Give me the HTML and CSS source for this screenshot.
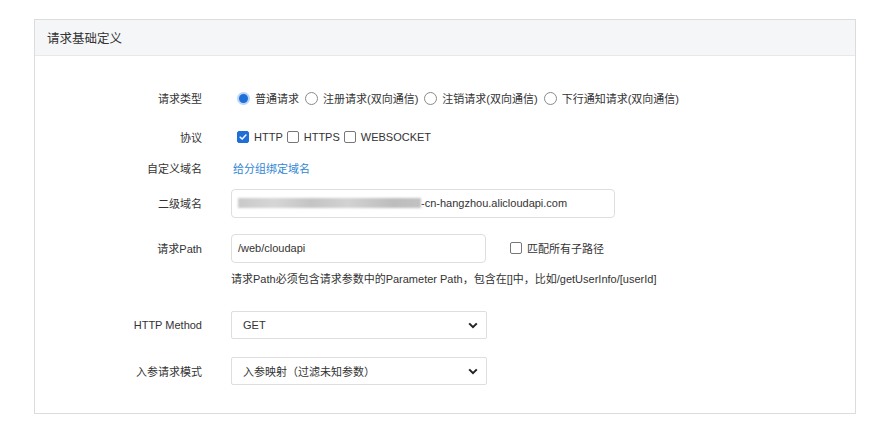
FILE: index.html
```html
<!DOCTYPE html>
<html lang="zh-CN">
<head>
<meta charset="utf-8">
<title>请求基础定义</title>
<link rel="stylesheet" href="styles.css">
</head>
<body>
<div class="page">
  <section class="panel">
    <header class="panel-head">请求基础定义</header>
    <div class="form">
      <div class="row r1">
        <div class="label">请求类型</div>
        <div class="ctrl options">
          <span class="opt"><span class="radio on"></span>普通请求</span>
          <span class="opt"><span class="radio"></span>注册请求(双向通信)</span>
          <span class="opt"><span class="radio"></span>注销请求(双向通信)</span>
          <span class="opt"><span class="radio"></span>下行通知请求(双向通信)</span>
        </div>
      </div>
      <div class="row r2">
        <div class="label">协议</div>
        <div class="ctrl options checks">
          <span class="opt"><span class="check on"><svg viewBox="0 0 12 12" width="12" height="12"><path d="M2.6 6.2 L5 8.5 L9.5 3.6" fill="none" stroke="#fff" stroke-width="1.8" stroke-linecap="round" stroke-linejoin="round"/></svg></span>HTTP</span>
          <span class="opt"><span class="check"></span>HTTPS</span>
          <span class="opt"><span class="check"></span>WEBSOCKET</span>
        </div>
      </div>
      <div class="row r3">
        <div class="label">自定义域名</div>
        <div class="ctrl"><a class="link" href="#">给分组绑定域名</a></div>
      </div>
      <div class="row r4">
        <div class="label">二级域名</div>
        <div class="ctrl">
          <div class="input wide"><span class="blur"></span><span>-cn-hangzhou.alicloudapi.com</span></div>
        </div>
      </div>
      <div class="row r5">
        <div class="label">请求Path</div>
        <div class="ctrl path">
          <div class="input mid"><span>/web/cloudapi</span></div>
          <span class="opt sub"><span class="check"></span>匹配所有子路径</span>
        </div>
      </div>
      <div class="row help">
        <div class="label"></div>
        <div class="ctrl hint">请求Path必须包含请求参数中的Parameter Path，包含在[]中，比如/getUserInfo/[userId]</div>
      </div>
      <div class="row r7">
        <div class="label">HTTP Method</div>
        <div class="ctrl">
          <div class="select"><span>GET</span><svg class="chev" viewBox="0 0 10 7" width="10" height="7"><path d="M1.2 1.4 L5 5.2 L8.8 1.4" fill="none" stroke="#222" stroke-width="2"/></svg></div>
        </div>
      </div>
      <div class="row r8">
        <div class="label">入参请求模式</div>
        <div class="ctrl">
          <div class="select"><span>入参映射（过滤未知参数）</span><svg class="chev" viewBox="0 0 10 7" width="10" height="7"><path d="M1.2 1.4 L5 5.2 L8.8 1.4" fill="none" stroke="#222" stroke-width="2"/></svg></div>
        </div>
      </div>
    </div>
  </section>
</div>
</body>
</html>
```
FILE: styles.css
```css
* { box-sizing: border-box; }
html, body { margin: 0; padding: 0; background: #fff; }
body {
  font-family: "Liberation Sans", "Noto Sans CJK SC", sans-serif;
  font-size: 11px;
  color: #333;
}
.page { padding: 19px 31px 0 34px; }
.panel {
  width: 822px;
  height: 395px;
  border: 1px solid #dcdcdc;
}
.panel-head {
  height: 36px;
  background: #f5f6f8;
  border-bottom: 1px solid #e8e8e8;
  padding-left: 12px;
  display: flex;
  align-items: center;
  font-size: 12.5px;
  color: #333;
}
.form { padding-top: 28px; }
.row { display: flex; align-items: center; height: 28px; }
.label {
  width: 167px;
  flex: none;
  text-align: right;
  color: #333;
}
.ctrl { margin-left: 29px; display: flex; align-items: center; }
.options { margin-left: 35px; }
.opt { display: inline-flex; align-items: center; margin-right: 6px; white-space: nowrap; }
.r1 { margin-top: 0; }
.r2 { margin-top: 11px; }
.r3 { margin-top: 3px; }
.r4 { margin-top: 7px; }
.r5 { margin-top: 17px; }
.help { margin-top: 4px; height: 24px; }
.r7 { margin-top: 21px; }
.r8 { margin-top: 18px; }

.radio {
  width: 13px; height: 13px; border-radius: 50%;
  border: 1px solid #8a8a8a;
  margin-right: 5px;
  display: inline-flex; align-items: center; justify-content: center;
  background: #fff;
}
.radio.on { border: 2px solid #b9d4f5; background: #1f6fd8; }
.check {
  width: 12px; height: 12px; border-radius: 2px;
  border: 1px solid #777;
  margin-right: 5px;
  display: inline-flex; align-items: center; justify-content: center;
  background: #fff;
}
.check.on { background: #1f6fd8; border-color: #1f6fd8; }
.check svg { display: block; }
.checks .opt { margin-right: 4px; }

.link { color: #2f86d4; text-decoration: none; margin-left: 2px; }

.input {
  height: 29px;
  border: 1px solid #dedede;
  border-radius: 4px;
  display: flex; align-items: center;
  padding-left: 6px;
  color: #333;
  background: #fff;
}
.input.wide { width: 384px; }
.input.mid { width: 255px; }
.blur {
  display: inline-block; width: 183px; height: 10px;
  background: linear-gradient(90deg, #c9c9c9, #d6d6d6 20%, #c4c4c4 40%, #d2d2d2 60%, #bdbdbd 85%, #c2c2c2);
  filter: blur(1.2px);
}
.path .sub { margin-left: 24px; }
.hint { color: #333; }

.select {
  width: 256px;
  height: 28px;
  border: 1px solid #dedede;
  border-radius: 2px;
  display: flex; align-items: center; justify-content: space-between;
  padding: 0 8px 0 11px;
  color: #333;
}
.chev { display: block; }
```
